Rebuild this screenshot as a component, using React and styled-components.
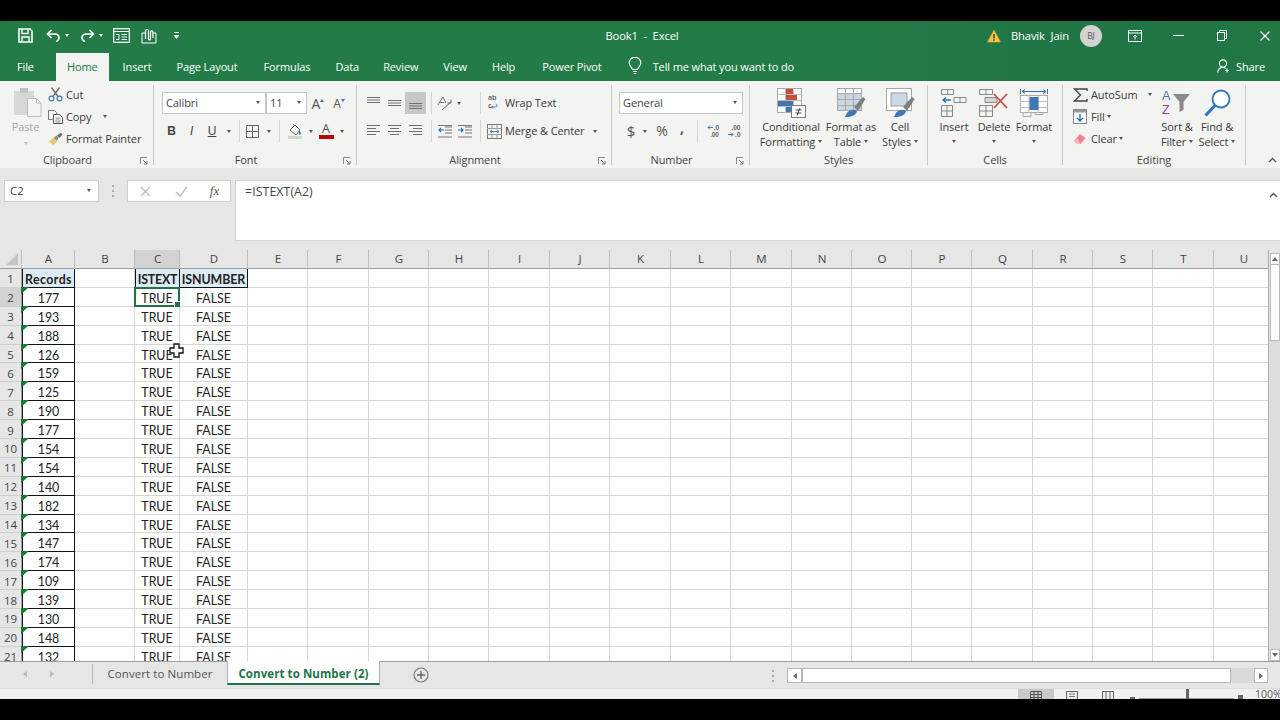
import React from "react";
import styled, { createGlobalStyle } from "styled-components";

const Global = createGlobalStyle`
  html, body { margin: 0; padding: 0; background: #000; }
  body { font-family: "Open Sans", "Noto Sans", sans-serif; color: #333; }
  * { box-sizing: border-box; }
`;

const Page = styled.div`
  position: relative; width: 1280px; height: 720px; overflow: hidden; background: #000;
  display: flex; flex-direction: column;
`;
const Black = styled.div`flex: none; height: ${p => p.$h}px; background: #000;`;

/* title bar */
const TitleBar = styled.header`
  flex: none; height: 32px; padding-bottom: 3px; color: #fff;
  background: linear-gradient(90deg, #237b48 0%, #237b48 68%, #1f7544 85%, #217845 100%);
  display: grid; grid-template-columns: 1fr auto 1fr; align-items: center;
  font-size: 11.2px; letter-spacing: -0.1px;
`;
const Quick = styled.div`display: flex; align-items: center; padding-left: 18px;`;
const QSlot = styled.span`display: flex; align-items: center; justify-content: center; flex: none; width: ${p => p.$w}px;`;
const WhiteCaret = styled.span`display: block; width: 0; height: 0; border: 2.5px solid transparent; border-top: 3px solid #fff; border-bottom: 0;`;
const TitleText = styled.div`padding-left: 4px; padding-bottom: 1px; white-space: pre;`;
const Account = styled.div`display: flex; align-items: center; justify-content: flex-end; padding-right: 10px;`;
const UserName = styled.span`margin: 0 11px 1px 10px; white-space: pre;`;
const Avatar = styled.span`
  width: 22px; height: 22px; border-radius: 50%; background: #d3d2d0; color: #5a5a5a;
  font-size: 8.5px; display: flex; align-items: center; justify-content: center; margin-right: 26px;
`;
const WinBtn = styled.span`display: flex; justify-content: flex-end; width: ${p => p.$w}px;`;

const TabsBar = styled.nav`
  flex: none; height: 28px; color: #fff; font-size: 11px; letter-spacing: -0.12px;
  background: linear-gradient(90deg, #237b48 0%, #237b48 68%, #1f7544 85%, #217845 100%);
  display: flex; align-items: stretch; padding-left: 17px;
`;
const Tab = styled.span`
  display: flex; align-items: center; padding: 0 ${p => p.$active ? 11 : 0}px 2px;
  margin-left: ${p => p.$gap}px; white-space: nowrap;
  background: ${p => p.$active ? "#f3f3f1" : "transparent"};
  color: ${p => p.$active ? "#217346" : "#fff"};
`;
const ShareBox = styled.span`margin-left: auto; padding: 0 15px 2px 0; display: flex; align-items: center; gap: 5px;`;

/* ribbon */
const Ribbon = styled.section`
  flex: none; height: 87px; background: #f3f3f1; display: flex; align-items: flex-start;
  font-size: 11px; letter-spacing: -0.1px; color: #3a3a3a; position: relative; padding-top: 4px;
`;
const Group = styled.div`
  flex: none; width: ${p => p.$w}px; height: 80px; border-right: 1px solid #c8c8c6;
  display: flex; flex-direction: column;
`;
const GroupBody = styled.div`flex: none; height: 70px; display: flex; padding-left: ${p => p.$pl || 0}px;`;
const GroupLabel = styled.div`
  flex: none; height: 10px; line-height: 10px; display: flex; font-size: 11px; color: #444;
`;
const LabelText = styled.span`flex: 1; text-align: center;`;
const Launcher = styled.span`flex: none; width: 18px; display: flex; align-items: center; justify-content: center; padding-top: 2px;`;
const Collapse = styled.span`margin-left: auto; align-self: flex-end; margin-right: 3px; margin-bottom: 5px; display: flex;`;

const PasteCol = styled.div`
  flex: none; width: 48px; padding: 3px 0 0 3px; display: flex; flex-direction: column; align-items: center; color: #a9a9a9;
`;
const PasteIconBox = styled.span`display: flex; margin-left: 4px;`;
const PasteLabel = styled.span`margin-top: 1px; line-height: 16px;`;
const PasteCaret = styled.span`
  display: block; width: 0; height: 0; margin-top: 7px;
  border-left: 2.5px solid transparent; border-right: 2.5px solid transparent; border-top: 3px solid #bbb;
`;
const SmallCol = styled.div`flex: none; width: ${p => p.$w}px; display: flex; flex-direction: column; margin-top: -1px;`;
const SmallRow = styled.div`height: 22px; display: flex; align-items: center; white-space: nowrap; padding-bottom: 1px;`;
const SmallIcon = styled.span`flex: none; width: 18px; display: flex; justify-content: flex-start; align-items: center;`;
const Rows = styled.div`flex: none; display: flex; flex-direction: column; gap: 6px; padding-top: 7px;`;
const Row = styled.div`height: 22px; display: flex; align-items: center; white-space: nowrap;`;
const RowText = styled.span`padding-bottom: 2px;`;
const Btn = styled.span`
  flex: none; width: ${p => p.$w}px; height: 22px; display: flex; align-items: center; justify-content: center;
  background: ${p => p.$on ? "#c6c6c6" : "transparent"};
`;
const Sep = styled.span`flex: none; width: ${p => p.$w}px; height: 22px; display: flex; justify-content: center;
  &::before { content: ""; width: 1px; height: 100%; background: #d4d4d2; }
`;
const Spacer = styled.span`flex: none; width: ${p => p.$w}px;`;
const Caret = styled.span`
  display: block; width: 0; height: 0; flex: none;
  border-left: 2.5px solid transparent; border-right: 2.5px solid transparent; border-top: 3px solid #555;
  margin-left: ${p => p.$ml || 0}px;
`;
const Combo = styled.div`
  flex: none; width: ${p => p.$w}px; height: 22px; background: #fff; border: 1px solid #c6c6c6;
  display: flex; align-items: center; justify-content: space-between; padding: 0 5px 2px 3px; color: #444;
`;
const BigBtn = styled.div`
  flex: none; width: ${p => p.$w}px; padding-top: 3px; display: flex; flex-direction: column; align-items: center;
`;
const BigIcon = styled.div`height: 30px; display: flex; justify-content: center; align-items: center;`;
const BigText = styled.div`margin-top: 1px; line-height: 15px; text-align: center; white-space: nowrap; display: flex; flex-direction: column; align-items: center;`;
const BigLine = styled.span`height: 15px; display: flex; align-items: center; gap: 3px;`;
const BoldMark = styled.span`font-weight: ${p => p.$b ? 700 : 400}; font-style: ${p => p.$i ? "italic" : "normal"}; text-decoration: ${p => p.$u ? "underline" : "none"}; font-family: "Liberation Sans", sans-serif; font-size: 12px; color: #444;`;
const Symbol = styled.span`font-size: ${p => p.$s}px; color: #555; line-height: 1; padding-bottom: ${p => p.$up || 0}px; font-weight: ${p => p.$w || 400};`;

/* small lettered icons, kept as real text */
const SizeA = styled.span`display: flex; align-items: flex-end; height: 16px;`;
const SizeLetter = styled.span`font-size: ${p => p.$s}px; line-height: 14px; color: #555;`;
const SizeMark = styled.span`
  display: block; width: 0; height: 0; margin: 0 0 9px 0;
  border-left: 2.5px solid transparent; border-right: 2.5px solid transparent;
  ${p => p.$up ? "border-bottom: 3px solid #666;" : "border-top: 3px solid #3f78b5;"}
`;
const ColorA = styled.span`display: flex; flex-direction: column; align-items: center; width: 15px;`;
const ColorLetter = styled.span`font-size: 12.5px; line-height: 12px; color: #555;`;
const ColorBar = styled.span`display: block; width: 15px; height: 3.5px; background: #c00000;`;
const WrapBox = styled.span`display: flex; flex-direction: column; width: 13px; padding-bottom: 2px;`;
const WrapLine = styled.span`display: flex; align-items: center; height: 8px; font-size: 7px; line-height: 8px; font-weight: 600; color: #555; letter-spacing: 0;`;
const Tiny = styled.span`display: flex; flex-direction: column; align-items: flex-end; width: 17px;`;
const TinyLine = styled.span`display: flex; align-items: center; height: 7px; gap: 1px; font: 700 6.5px/7px "Liberation Sans", sans-serif; color: #666; letter-spacing: 0;`;
const SortBox = styled.span`display: flex; align-items: center; width: 30px; height: 30px;`;
const SortLetters = styled.span`display: flex; flex-direction: column; width: 10px; font-family: "Liberation Sans", sans-serif; font-size: 12.5px; line-height: 14.4px; letter-spacing: 0;`;
const SortLetter = styled.span`color: ${p => p.$c};`;

/* formula bar */
const Band = styled.div`flex: none; height: ${p => p.$h}px; background: #e6e6e4;`;
const FormulaBar = styled.div`
  flex: none; height: 63px; background: #e6e6e4; display: flex; align-items: flex-start; padding: 2px 0 0 4px;
  font-size: 11.5px; color: #444;
`;
const NameBox = styled.div`
  flex: none; width: 95px; height: 22px; background: #fff; border: 1px solid #cfcfcd;
  display: flex; align-items: center; justify-content: space-between; padding: 0 7px 1px 5px;
`;
const Dots = styled.span`flex: none; width: 28px; height: 22px; display: flex; align-items: center; justify-content: center;`;
const FxBox = styled.div`
  flex: none; width: 104px; height: 22px; background: #fff; border: 1px solid #cfcfcd; display: flex; align-items: center;
`;
const FxSlot = styled.span`flex: none; width: ${p => p.$w}px; display: flex; justify-content: center; align-items: center;`;
const FxMark = styled.span`font-family: "Liberation Serif", serif; font-style: italic; font-size: 13px; color: #555;`;
const FormulaInput = styled.div`
  flex: 1; height: 61px; margin-left: 4px; background: #fff; border: 1px solid #d4d4d2; border-right: 0;
  padding: 2px 0 0 9px; display: flex; justify-content: space-between; line-height: 18px; font-size: 12.3px; letter-spacing: 0.1px;
`;
const FormulaCollapse = styled.span`padding: 2px 2px 0 0;`;

/* sheet */
const COLS = [["",22],["A",53],["B",60],["C",45],["D",68],["E",60],["F",61],["G",60],["H",60],["I",61],["J",60],["K",61],["L",60],["M",61],["N",60],["O",60],["P",60],["Q",61],["R",60],["S",60],["T",61],["U",60]];
const Sheet = styled.div`flex: none; height: 411px; display: flex; background: #e6e6e4;`;
const Grid = styled.div`
  flex: none; width: 1269px; height: 411px; overflow: hidden; background: #fff; border-right: 1px solid #a8a8a8;
  display: grid; grid-template-columns: ${COLS.map(c => c[1] + "px").join(" ")};
  grid-template-rows: 19px repeat(21, 18.9px);
  font-family: Lato, "Liberation Sans", sans-serif; font-size: 12.4px; color: #222;
`;
const Corner = styled.div`
  background: #e6e6e6; border-bottom: 1px solid #9e9e9e; border-right: 1px solid #bdbdbd; display: flex; align-items: flex-end; justify-content: flex-end; padding: 0 3px 3px 0;
  &::before { content: ""; border-left: 12px solid transparent; border-bottom: 12px solid #c4c4c4; }
`;
const ColHead = styled.div`
  background: ${p => p.$on ? "#d2d2d2" : "#e6e6e6"}; border-bottom: 1px solid #9e9e9e; border-right: 1px solid #bdbdbd;
  display: flex; align-items: center; justify-content: center; color: #444;
  font-family: "Open Sans", sans-serif; font-size: 11.5px; padding: 0 0 1px 1px;
`;
const RowHead = styled.div`
  background: ${p => p.$on ? "#d2d2d2" : "#e6e6e6"}; border-bottom: 1px solid #cfcfcf; border-right: 1px solid #a8a8a8;
  display: flex; align-items: center; justify-content: center; color: #444;
  font-family: "Open Sans", sans-serif; font-size: 11.5px; padding-top: 2px;
`;
const Cell = styled.div`
  position: relative; display: flex; align-items: center; justify-content: center; white-space: nowrap; padding-top: 3px;
  border-right: 1px solid ${p => p.$box ? "#111" : "#d6d6d6"}; border-bottom: 1px solid ${p => p.$box ? "#111" : "#d6d6d6"};
  border-left: ${p => p.$left ? "1px solid #111" : "0"};
  background: ${p => p.$blue ? "#ddebf7" : "#fff"};
  font-weight: ${p => p.$bold ? 700 : 400};
  letter-spacing: ${p => p.$sp || 0}px;
`;
const ErrFlag = styled.span`
  position: absolute; left: -2px; top: -1px; width: 0; height: 0; border-right: 8px solid transparent; border-top: 7px solid #1a7a34;
`;
const Selection = styled.span`
  position: absolute; inset: -1px -1px -1px -1px; border: 2px solid #217346; pointer-events: none;
  &::after { content: ""; position: absolute; right: -4px; bottom: -4px; width: 6px; height: 6px; background: #217346; border: 1px solid #fff; }
`;
const VScroll = styled.div`flex: 1; display: flex; flex-direction: column; padding: 3px 0 0 1px; align-items: stretch;`;
const SBtn = styled.span`
  flex: none; height: ${p => p.$h}px; width: ${p => p.$w ? p.$w + "px" : "auto"}; background: #fff; border: 1px solid #b8b8b8;
  display: flex; align-items: center; justify-content: center;
`;
const VThumb = styled.span`flex: none; height: 76px; background: #fff; border: 1px solid #b8b8b8; border-top: 0;`;
const VTrack = styled.span`flex: 1; background: #dcdcdc;`;
const Tri = styled.span`
  display: block; width: 0; height: 0;
  ${p => p.$dir === "up" && "border: 3px solid transparent; border-bottom: 4px solid #666; border-top: 0;"}
  ${p => p.$dir === "down" && "border: 3px solid transparent; border-top: 4px solid #666; border-bottom: 0;"}
  ${p => p.$dir === "left" && "border: 3.5px solid transparent; border-right: 4px solid #666; border-left: 0;"}
  ${p => p.$dir === "right" && "border: 3.5px solid transparent; border-left: 4px solid #666; border-right: 0;"}
`;

/* sheet tabs */
const SheetTabs = styled.div`
  flex: none; height: 27px; background: #e6e6e4; border-top: 1px solid #a0a0a0; display: flex; align-items: flex-start;
  font-size: 11.5px; color: #555; letter-spacing: 0.08px;
`;
const NavArrows = styled.div`flex: none; width: 93px; height: 20px; margin-top: 2px; border-right: 1px solid #b8b8b8; display: flex; align-items: center; padding-left: 23px; gap: 23px;`;
const FadedTri = styled(Tri)`opacity: .35;`;
const SheetTab = styled.div`
  flex: none; height: 23px; display: flex; align-items: center; white-space: nowrap;
  width: ${p => p.$w}px; justify-content: center;
  ${p => p.$active && "background:#fff; color:#217346; font-weight:700; border-bottom:2px solid #217346; border-left:1px solid #b0b0b0; border-right:1px solid #b0b0b0; margin-top:-1px; height:24px; padding-top:3px;"}
`;
const AddSheet = styled.span`flex: none; margin-left: 33px; margin-top: 5px; display: flex;`;
const HScroll = styled.div`
  margin-left: auto; margin-right: 12px; margin-top: 6px; flex: none; display: flex; align-items: center;
`;
const DragDots = styled.span`flex: none; margin-right: 13px; display: flex;`;
const HThumb = styled.span`flex: none; width: 429px; height: 15px; background: #fff; border: 1px solid #b8b8b8;`;
const HTrack = styled.span`flex: none; width: 23px; height: 15px; background: #d9d9d9;`;

/* status bar */
const Status = styled.footer`
  flex: none; height: 11px; overflow: hidden; background: #f1f1ef; border-top: 1px solid #dcdcda;
  display: flex; justify-content: flex-end; align-items: flex-start; font-size: 10.5px; color: #555;
`;
const ViewBtn = styled.span`
  flex: none; width: 36px; height: 11px; display: flex; justify-content: center; padding-top: 2px; background: ${p => p.$on ? "#c9c9c9" : "transparent"};
`;
const ZoomTrack = styled.span`
  flex: none; width: 124px; height: 10px; display: flex; align-items: flex-end; position: relative; padding: 0 0 0 4px;
`;
const ZoomMinus = styled.span`flex: none; width: 5px; height: 2px; background: #666; margin-right: 4px;`;
const ZoomLine = styled.span`flex: none; width: 95px; height: 1px; background: #999;`;
const ZoomPlus = styled.span`flex: none; width: 5px; height: 4px; background: #666; margin-left: 4px;`;
const ZoomThumb = styled.span`position: absolute; left: 60px; top: 0; width: 3px; height: 10px; background: #666;`;
const ZoomText = styled.span`flex: none; width: 30px; padding-left: 5px; white-space: nowrap; line-height: 11px;`;

const CursorWrap = styled.span`position: absolute; left: 169px; top: 343px; display: flex; pointer-events: none;`;

/* icons */
const Svg = ({ w, h, children, ...r }) => <svg width={w} height={h} viewBox={`0 0 ${w} ${h}`} fill="none" {...r}>{children}</svg>;
const Lines = ({ rows, c = "#707070", h = 1 }) => (
  <Svg w={16} h={14}>{rows.map(([a, b, y], i) => <rect key={i} x={a} y={y} width={b - a} height={h} fill={c} />)}</Svg>
);
const Save = () => <Svg w={15} h={15}><path d="M1 1h11l2 2v11H1z" stroke="#fff" strokeWidth="1.6"/><path d="M4 1.5v4h6v-4M4 14v-5h7v5" stroke="#fff" strokeWidth="1.4"/></Svg>;
const Undo = () => <Svg w={15} h={13}><path d="M5.5 1 1.5 5l4 4" stroke="#fff" strokeWidth="1.7"/><path d="M2 5h7a4 4 0 0 1 4 4 4 4 0 0 1-3 3.5" stroke="#fff" strokeWidth="1.7"/></Svg>;
const Redo = () => <Svg w={15} h={13}><path d="M9.5 1l4 4-4 4" stroke="#fff" strokeWidth="1.7"/><path d="M13 5H6a4 4 0 0 0-4 4 4 4 0 0 0 3 3.5" stroke="#fff" strokeWidth="1.7"/></Svg>;
const FormIco = () => <Svg w={17} h={15}><rect x=".7" y=".7" width="15.6" height="13.6" stroke="#fff" strokeWidth="1.2"/><path d="M1 3.5h15M3 6.5h3v5H3M8.5 6.5H14M8.5 9H14M8.5 11.5H14" stroke="#fff"/></Svg>;
const ClipIco = () => <Svg w={16} h={16}><path d="M1 5v10h14V5h-3M4 5H1" stroke="#fff"/><path d="M4.5 11V3a1.5 1.5 0 0 1 3 0v8a1 1 0 0 0 2 0V4a1.2 1.2 0 0 1 2.4 0v6" stroke="#fff" strokeWidth="1.2"/></Svg>;
const Custom = () => <Svg w={7} h={8}><rect x="1" y="0" width="5" height="1" fill="#fff"/><path d="M0.5 3h6L3.5 7z" fill="#fff"/></Svg>;
const Warn = () => <Svg w={14} h={14}><path d="M7 1 13.5 13h-13z" fill="#f6c342" stroke="#e0a52c" strokeWidth=".6"/><rect x="6.3" y="5" width="1.4" height="4.5" fill="#4a3a10"/><rect x="6.3" y="10.3" width="1.4" height="1.4" fill="#4a3a10"/></Svg>;
const DisplayOpts = () => <Svg w={14} h={12}><rect x=".5" y=".5" width="13" height="11" stroke="#fff"/><path d="M1 3h12" stroke="#fff"/><path d="M7 9.5V5M5 7l2-2 2 2" stroke="#fff"/></Svg>;
const Minimize = () => <Svg w={11} h={2}><rect width="11" height="1" fill="#fff"/></Svg>;
const Restore = () => <Svg w={10} h={11}><rect x=".5" y="2.5" width="7" height="8" stroke="#fff"/><path d="M2.5 2.5v-2h7v8h-2" stroke="#fff"/></Svg>;
const CloseX = () => <Svg w={10} h={10}><path d="M.5.5l9 9M9.5.5l-9 9" stroke="#fff" strokeWidth="1.1"/></Svg>;
const Bulb = () => <Svg w={14} h={18}><path d="M4.5 12.5C4 10.5 1.2 9 1.2 6a5.8 5.8 0 0 1 11.6 0c0 3-2.8 4.5-3.3 6.5z" stroke="#fff" strokeWidth="1.1"/><path d="M5 14.5h4M5.7 16.5h2.6" stroke="#fff"/></Svg>;
const ShareIco = () => <Svg w={14} h={14}><circle cx="6" cy="4.5" r="3.6" stroke="#fff" strokeWidth="1.1"/><path d="M.7 13.5c.3-3 2.5-5 5.3-5 1 0 2 .3 2.8.8M10 9.5v4M8 11.5h4" stroke="#fff" strokeWidth="1.1"/></Svg>;
const PasteIco = () => <Svg w={28} h={30}><rect x="0" y="3" width="20" height="24" fill="#d7d7d5"/><rect x="6" y="0" width="8" height="5" fill="#c2c2c0"/><path d="M13.5 10.5h9l4.5 4.5v13.5H13.5z" fill="#f4f4f2" stroke="#bdbdbb"/><path d="M22.5 10.5V15H27" stroke="#bdbdbb"/></Svg>;
const Cut = () => <Svg w={15} h={15}><circle cx="3.5" cy="11.5" r="2.4" stroke="#3f78b5" strokeWidth="1.2"/><circle cx="11.5" cy="11.5" r="2.4" stroke="#3f78b5" strokeWidth="1.2"/><path d="M5 9.5 11.5.5M10 9.5 3.5.5" stroke="#666" strokeWidth="1.3"/></Svg>;
const Copy = () => <Svg w={15} h={14}><path d="M.5.5h6l2 2v2M.5.5v9h4" stroke="#777"/><path d="M5.5 4.5h6l3 3v6h-9z" stroke="#555" fill="#fff"/><path d="M7.5 8h5M7.5 10h5M7.5 12h5" stroke="#888"/></Svg>;
const Painter = () => <Svg w={16} h={14}><path d="M1 9.5 5 13l4-3-4-4z" fill="#e7c56b"/><path d="M5.5 6l3-2.5 2 2L9 9z" fill="#8a8a8a"/><path d="M9 3.5 13 .8l1.5 1.7-3.2 3.5z" fill="#6b6b6b"/></Svg>;
const Borders = () => <Svg w={13} h={13}><rect x=".5" y=".5" width="12" height="12" stroke="#666"/><path d="M6.5 0v13M0 6.5h13" stroke="#666"/></Svg>;
const Fill = () => <Svg w={16} h={16}><rect x="1" y="13" width="14" height="3" fill="#d4d4d2"/><path d="M3 7 8 2l5 5-4 5z" stroke="#666" fill="#fff"/><path d="M6 1.5 8 3" stroke="#666"/><path d="M12 7c1.5 1.5 2.5 3 1.5 4.5S11 10 12 7z" fill="#3f78b5"/></Svg>;
const Orient = () => <Svg w={16} h={15}><path d="M1 9 6 1l3 6M2.8 6.5h4.5" stroke="#777"/><path d="M5 14l9-8" stroke="#666"/><path d="M14 3.5V7h-3.5" stroke="#666"/></Svg>;
const WrapArrow = () => <Svg w={7} h={6}><path d="M.5 4h4c2 0 2-3 0-3M2 2.5.5 4 2 5.5" stroke="#3f78b5"/></Svg>;
const Merge = () => <Svg w={15} h={15}><rect x=".5" y=".5" width="14" height="14" stroke="#777"/><path d="M0 4.5h15M0 10.5h15M5 .5v4M10 .5v4M5 10.5v4M10 10.5v4" stroke="#999"/><path d="M3 7.5h9M5 6 3 7.5 5 9M10 6l2 1.5L10 9" stroke="#3f78b5" strokeWidth=".9"/></Svg>;
const Indent = ({ inc }) => <Svg w={16} h={13}><path d="M8 2h7M8 5h7M8 8h7M1 12h14M1 0.5h14" stroke="#777"/><path d={inc ? "M1 5h5M4 3l2 2-2 2" : "M2 5h5M4 3 2 5l2 2"} stroke="#2f6fb5" strokeWidth="1.2"/></Svg>;
const ArrowL = () => <Svg w={6} h={5}><path d="M6 2.5H1M3 .5l-2 2 2 2" stroke="#3f78b5"/></Svg>;
const ArrowR = () => <Svg w={6} h={5}><path d="M0 2.5h5M3 .5l2 2-2 2" stroke="#3f78b5"/></Svg>;
const Launch = () => <Svg w={8} h={8}><path d="M.5 7V.5H7" stroke="#888"/><path d="M3 3l4 4M7 4v3H4" stroke="#777"/></Svg>;
const Chevron = () => <Svg w={9} h={6}><path d="M1 5l3.5-3.5L8 5" stroke="#555" strokeWidth="1.3"/></Svg>;
const CondFmt = () => <Svg w={29} h={30}>
  <rect x=".5" y=".5" width="24" height="24" fill="#fff" stroke="#a6a6a6"/>
  <path d="M8.5 0v25M16.5 0v25M0 6.5h25M0 12.5h25M0 18.5h25" stroke="#bdbdbd"/>
  <rect x="9" y="1" width="7" height="5" fill="#c0533a"/><rect x="9" y="7" width="11" height="5" fill="#c0533a"/>
  <rect x="1" y="13" width="15" height="5" fill="#3f78b5"/><rect x="9" y="19" width="7" height="5" fill="#3f78b5"/>
  <rect x="14.5" y="17.5" width="14" height="12" fill="#fff" stroke="#7a7a7a"/>
  <path d="M18.5 22h6M18.5 25h6M23 20l-3 7.5" stroke="#444"/></Svg>;
const FmtTable = () => <Svg w={29} h={30}>
  <rect x=".5" y=".5" width="24" height="22" fill="#fff" stroke="#a6a6a6"/>
  <rect x="1" y="5" width="23" height="17" fill="#c9d6e4"/>
  <path d="M8.5 0v23M16.5 0v23M0 5.5h25M0 11.5h25M0 17.5h25" stroke="#a8a8a8"/>
  <path d="M17 19 26 9l2.5 2L21 23z" fill="#7f7f7f"/><path d="M8 29c2-7 8-9 12-6-1 4-5 6-12 6z" fill="#3f78b5"/></Svg>;
const CellStyle = () => <Svg w={29} h={30}>
  <rect x=".5" y=".5" width="25" height="22" fill="#fff" stroke="#a6a6a6"/>
  <rect x="5" y="5" width="16" height="13" fill="#c9d9e8" stroke="#999"/>
  <path d="M17 19 26 9l2.5 2L21 23z" fill="#7f7f7f"/><path d="M8 29c2-7 8-9 12-6-1 4-5 6-12 6z" fill="#3f78b5"/></Svg>;
const InsertIco = () => <Svg w={26} h={28}>
  <path d="M.5.5h12v5H.5zM6.5.5v5M.5 16.5h11v11H.5zM6 16.5v11M.5 22h11" stroke="#888"/>
  <path d="M13 8.5h12v5H13zM19 8.5v5" stroke="#888"/><path d="M2 11h8M5 8.5 2 11l3 2.5" stroke="#2f6fb5" strokeWidth="1.4"/></Svg>;
const DeleteIco = () => <Svg w={30} h={28}>
  <path d="M.5.5h13v5H.5zM7 .5v5M.5 16.5h13v11H.5zM7 16.5v11M.5 22h13" stroke="#888"/>
  <path d="M6 8.5h12v5H6z" stroke="#888" fill="#d4d4d4"/><path d="M15 5l13 14M28 5 15 19" stroke="#c8503a" strokeWidth="1.8"/></Svg>;
const FormatIco = () => <Svg w={28} h={30}>
  <path d="M.5 1v5M27.5 1v5M2 3.5h24M2 3.5l3-2M2 3.5l3 2M26 3.5l-3-2M26 3.5l-3 2" stroke="#2f6fb5"/>
  <rect x=".5" y="7.5" width="27" height="17" fill="#fff" stroke="#aaa"/>
  <path d="M9 7v18M18 7v18M0 13.5h28M0 19.5h28" stroke="#bbb"/>
  <rect x="9.5" y="9" width="9" height="13" fill="#3f78b5"/>
  <path d="M3 24.5v4h8v-4M15 24.5v2h8v-2" stroke="#aaa"/></Svg>;
const Sigma = () => <Svg w={15} h={14}><path d="M14 3V1H1.5l6 6-6 6H14v-2" stroke="#444" strokeWidth="1.4"/></Svg>;
const FillDown = () => <Svg w={14} h={15}><rect x=".5" y=".5" width="13" height="14" fill="#fff" stroke="#888"/><rect x="1" y="1" width="12" height="2.5" fill="#999"/><path d="M7 5v7M4 9l3 3 3-3" stroke="#2f6fb5" strokeWidth="1.4"/></Svg>;
const Eraser = () => <Svg w={13} h={12}><path d="M1 8l6-7 5.5 4-5 6H4z" fill="#ee7f94"/><path d="M1 8l3 3h3.5L4 5z" fill="#f6b6c1"/></Svg>;
const Funnel = () => <Svg w={19} h={20}><path d="M1 1h17l-6.5 8v8l-4 2V9z" fill="#8a8a8a"/></Svg>;
const FindIco = () => <Svg w={29} h={30}><circle cx="18" cy="11" r="8.5" stroke="#2f78c0" strokeWidth="1.8" fill="#fff"/><path d="M12 17.5 2.5 27.5" stroke="#2f78c0" strokeWidth="3.2"/></Svg>;
const DotsIco = () => <Svg w={2} h={12}><path d="M0 0h2v2H0zM0 5h2v2H0zM0 10h2v2H0z" fill="#a8a8a8"/></Svg>;
const XIco = () => <Svg w={11} h={11}><path d="M1 1l9 9M10 1l-9 9" stroke="#bfbfbf" strokeWidth="1.4"/></Svg>;
const CheckIco = () => <Svg w={13} h={11}><path d="M1 6l4 4 7-9" stroke="#bfbfbf" strokeWidth="1.5"/></Svg>;
const PlusCircle = () => <Svg w={16} h={16}><circle cx="8" cy="8" r="7" stroke="#777" strokeWidth="1.2"/><path d="M8 4v8M4 8h8" stroke="#666" strokeWidth="1.4"/></Svg>;
const NormalV = () => <Svg w={12} h={9}><path d="M.5.5h11v9h-11zM4 .5v9M8 .5v9M.5 3.5h11M.5 6.5h11" stroke="#555"/></Svg>;
const PageV = () => <Svg w={12} h={9}><path d="M.5.5h11v9h-11z" stroke="#666"/><path d="M3 3h6M3 5.5h6" stroke="#777"/></Svg>;
const BreakV = () => <Svg w={12} h={9}><path d="M.5.5h11v9h-11zM4 .5v9M8 .5v9" stroke="#666"/></Svg>;
const Cursor = () => <Svg w={15} h={15}><path d="M5 1h5v4h4v5h-4v4H5v-4H1V5h4z" fill="#fff" stroke="#111" strokeWidth="1.3"/></Svg>;

const records = [177,193,188,126,159,125,190,177,154,154,140,182,134,147,174,109,139,130,148,132];

const SheetGrid = () => (
  <Grid>
    {COLS.map(([n], i) => i === 0 ? <Corner key="c" /> : <ColHead key={n} $on={n === "C"}>{n}</ColHead>)}
    {Array.from({ length: 21 }, (_, r) => COLS.map(([n], c) => {
      const key = `${r}-${c}`;
      if (c === 0) return <RowHead key={key} $on={r === 1}>{r + 1}</RowHead>;
      if (r === 0) {
        const t = { A: ["Records", 0.4], C: ["ISTEXT", -0.25], D: ["ISNUMBER", -0.1] }[n];
        return t ? <Cell key={key} $box $blue $bold $sp={t[1]} $left={n !== "D"}>{t[0]}</Cell> : <Cell key={key} />;
      }
      if (n === "A") return <Cell key={key} $box $left><ErrFlag />{records[r - 1]}</Cell>;
      if (n === "C") return <Cell key={key}>TRUE{r === 1 && <Selection />}</Cell>;
      if (n === "D") return <Cell key={key}>FALSE</Cell>;
      return <Cell key={key} />;
    }))}
  </Grid>
);

const align = {
  top: [[1, 14, 1], [1, 14, 3.5], [1, 14, 6]],
  mid: [[1, 14, 4], [1, 14, 6.5], [1, 14, 9]],
  bot: [[1, 14, 7], [1, 14, 9.5], [1, 14, 12]],
  left: [[1, 14, 1], [1, 10, 4], [1, 14, 7], [1, 10, 10]],
  center: [[1, 14, 1], [3, 12, 4], [1, 14, 7], [3, 12, 10]],
  right: [[1, 14, 1], [5, 14, 4], [1, 14, 7], [5, 14, 10]],
};

export default function App() {
  return (
    <Page>
      <Global />
      <Black $h={21} />
      <TitleBar>
        <Quick>
          <Save />
          <Spacer $w={13} /><Undo /><QSlot $w={11}><WhiteCaret /></QSlot>
          <Spacer $w={8} /><Redo /><QSlot $w={11}><WhiteCaret /></QSlot>
          <Spacer $w={7} /><FormIco />
          <Spacer $w={11} /><ClipIco />
          <Spacer $w={16} /><Custom />
        </Quick>
        <TitleText>Book1  -  Excel</TitleText>
        <Account>
          <Warn />
          <UserName>Bhavik  Jain</UserName>
          <Avatar>BJ</Avatar>
          <DisplayOpts />
          <WinBtn $w={42}><Minimize /></WinBtn>
          <WinBtn $w={43}><Restore /></WinBtn>
          <WinBtn $w={43}><CloseX /></WinBtn>
        </Account>
      </TitleBar>
      <TabsBar>
        <Tab $gap={0}>File</Tab>
        <Tab $gap={22} $active>Home</Tab>
        <Tab $gap={14}>Insert</Tab>
        <Tab $gap={25}>Page Layout</Tab>
        <Tab $gap={26}>Formulas</Tab>
        <Tab $gap={25}>Data</Tab>
        <Tab $gap={24}>Review</Tab>
        <Tab $gap={25}>View</Tab>
        <Tab $gap={25}>Help</Tab>
        <Tab $gap={27}>Power Pivot</Tab>
        <Tab $gap={26}><Bulb /></Tab>
        <Tab $gap={11}>Tell me what you want to do</Tab>
        <ShareBox><ShareIco />Share</ShareBox>
      </TabsBar>

      <Ribbon>
        <Group $w={154}>
          <GroupBody>
            <PasteCol>
              <PasteIconBox><PasteIco /></PasteIconBox>
              <PasteLabel>Paste</PasteLabel>
              <PasteCaret />
            </PasteCol>
            <SmallCol $w={104}>
              <SmallRow><SmallIcon><Cut /></SmallIcon>Cut</SmallRow>
              <SmallRow><SmallIcon><Copy /></SmallIcon>Copy<Caret $ml={12} /></SmallRow>
              <SmallRow><SmallIcon><Painter /></SmallIcon>Format Painter</SmallRow>
            </SmallCol>
          </GroupBody>
          <GroupLabel><LabelText>Clipboard</LabelText><Launcher><Launch /></Launcher></GroupLabel>
        </Group>

        <Group $w={203}>
          <GroupBody $pl={8}>
            <Rows>
              <Row>
                <Combo $w={104}>Calibri<Caret /></Combo>
                <Combo $w={41}>11<Caret /></Combo>
                <Btn $w={22}><SizeA><SizeLetter $s={14}>A</SizeLetter><SizeMark $up /></SizeA></Btn>
                <Btn $w={20}><SizeA><SizeLetter $s={12}>A</SizeLetter><SizeMark /></SizeA></Btn>
              </Row>
              <Row>
                <Btn $w={19}><BoldMark $b>B</BoldMark></Btn>
                <Btn $w={21}><BoldMark $i>I</BoldMark></Btn>
                <Btn $w={20}><BoldMark $u>U</BoldMark></Btn>
                <Btn $w={14}><Caret /></Btn>
                <Sep $w={6} />
                <Btn $w={21}><Borders /></Btn>
                <Btn $w={12}><Caret /></Btn>
                <Sep $w={8} />
                <Btn $w={24}><Fill /></Btn>
                <Btn $w={7}><Caret /></Btn>
                <Btn $w={24}><ColorA><ColorLetter>A</ColorLetter><ColorBar /></ColorA></Btn>
                <Btn $w={8}><Caret /></Btn>
              </Row>
            </Rows>
          </GroupBody>
          <GroupLabel><LabelText>Font</LabelText><Launcher><Launch /></Launcher></GroupLabel>
        </Group>

        <Group $w={255}>
          <GroupBody $pl={6}>
            <Rows>
              <Row>
                <Btn $w={21}><Lines rows={align.top} /></Btn>
                <Btn $w={21}><Lines rows={align.mid} /></Btn>
                <Btn $w={21} $on><Lines rows={align.bot} /></Btn>
                <Sep $w={10} />
                <Btn $w={18}><Orient /></Btn>
                <Btn $w={10}><Caret /></Btn>
                <Spacer $w={12} />
                <Sep $w={8} />
                <Btn $w={21}><WrapBox><WrapLine>ab</WrapLine><WrapLine>c<WrapArrow /></WrapLine></WrapBox></Btn>
                <RowText>Wrap Text</RowText>
              </Row>
              <Row>
                <Btn $w={21}><Lines rows={align.left} /></Btn>
                <Btn $w={21}><Lines rows={align.center} /></Btn>
                <Btn $w={21}><Lines rows={align.right} /></Btn>
                <Sep $w={10} />
                <Btn $w={18}><Indent /></Btn>
                <Btn $w={22}><Indent inc /></Btn>
                <Sep $w={8} />
                <Btn $w={21}><Merge /></Btn>
                <RowText>Merge &amp; Center</RowText>
                <Caret $ml={8} />
              </Row>
            </Rows>
          </GroupBody>
          <GroupLabel><LabelText>Alignment</LabelText><Launcher><Launch /></Launcher></GroupLabel>
        </Group>

        <Group $w={138}>
          <GroupBody $pl={7}>
            <Rows>
              <Row><Combo $w={124}>General<Caret /></Combo></Row>
              <Row>
                <Spacer $w={2} />
                <Btn $w={20}><Symbol $s={15}>$</Symbol></Btn>
                <Btn $w={8}><Caret /></Btn>
                <Btn $w={26}><Symbol $s={14}>%</Symbol></Btn>
                <Btn $w={14}><Symbol $s={14} $up={7} $w={700}>,</Symbol></Btn>
                <Sep $w={16} />
                <Btn $w={14}><Tiny><TinyLine><ArrowL />.0</TinyLine><TinyLine>.00</TinyLine></Tiny></Btn>
                <Btn $w={26}><Tiny><TinyLine>.00</TinyLine><TinyLine><ArrowR />.0</TinyLine></Tiny></Btn>
              </Row>
            </Rows>
          </GroupBody>
          <GroupLabel><LabelText>Number</LabelText><Launcher><Launch /></Launcher></GroupLabel>
        </Group>

        <Group $w={178}>
          <GroupBody $pl={10}>
            <BigBtn $w={62}><BigIcon><CondFmt /></BigIcon><BigText><BigLine>Conditional</BigLine><BigLine>Formatting<Caret /></BigLine></BigText></BigBtn>
            <BigBtn $w={58}><BigIcon><FmtTable /></BigIcon><BigText><BigLine>Format as</BigLine><BigLine>Table<Caret /></BigLine></BigText></BigBtn>
            <BigBtn $w={40}><BigIcon><CellStyle /></BigIcon><BigText><BigLine>Cell</BigLine><BigLine>Styles<Caret /></BigLine></BigText></BigBtn>
          </GroupBody>
          <GroupLabel><LabelText>Styles</LabelText></GroupLabel>
        </Group>

        <Group $w={135}>
          <GroupBody $pl={6}>
            <BigBtn $w={40}><BigIcon><InsertIco /></BigIcon><BigText><BigLine>Insert</BigLine><BigLine><Caret /></BigLine></BigText></BigBtn>
            <BigBtn $w={40}><BigIcon><DeleteIco /></BigIcon><BigText><BigLine>Delete</BigLine><BigLine><Caret /></BigLine></BigText></BigBtn>
            <BigBtn $w={40}><BigIcon><FormatIco /></BigIcon><BigText><BigLine>Format</BigLine><BigLine><Caret /></BigLine></BigText></BigBtn>
          </GroupBody>
          <GroupLabel><LabelText>Cells</LabelText></GroupLabel>
        </Group>

        <Group $w={183}>
          <GroupBody $pl={10}>
            <SmallCol $w={84}>
              <SmallRow><SmallIcon><Sigma /></SmallIcon>AutoSum<Caret $ml={10} /></SmallRow>
              <SmallRow><SmallIcon><FillDown /></SmallIcon>Fill<Caret $ml={2} /></SmallRow>
              <SmallRow><SmallIcon><Eraser /></SmallIcon>Clear<Caret $ml={2} /></SmallRow>
            </SmallCol>
            <BigBtn $w={40}><BigIcon><SortBox><SortLetters><SortLetter $c="#3f78b5">A</SortLetter><SortLetter $c="#7d4a9d">Z</SortLetter></SortLetters><Funnel /></SortBox></BigIcon><BigText><BigLine>Sort &amp;</BigLine><BigLine>Filter<Caret /></BigLine></BigText></BigBtn>
            <BigBtn $w={40}><BigIcon><FindIco /></BigIcon><BigText><BigLine>Find &amp;</BigLine><BigLine>Select<Caret /></BigLine></BigText></BigBtn>
          </GroupBody>
          <GroupLabel><LabelText>Editing</LabelText></GroupLabel>
        </Group>
        <Collapse><Chevron /></Collapse>
      </Ribbon>

      <Band $h={10} />
      <FormulaBar>
        <NameBox>C2<Caret /></NameBox>
        <Dots><DotsIco /></Dots>
        <FxBox>
          <FxSlot $w={35}><XIco /></FxSlot>
          <FxSlot $w={36}><CheckIco /></FxSlot>
          <FxSlot $w={31}><FxMark>fx</FxMark></FxSlot>
        </FxBox>
        <FormulaInput>=ISTEXT(A2)<FormulaCollapse><Chevron /></FormulaCollapse></FormulaInput>
      </FormulaBar>
      <Band $h={9} />

      <Sheet>
        <SheetGrid />
        <VScroll>
          <SBtn $h={12}><Tri $dir="up" /></SBtn>
          <VThumb />
          <VTrack />
          <SBtn $h={12}><Tri $dir="down" /></SBtn>
        </VScroll>
      </Sheet>

      <SheetTabs>
        <NavArrows><FadedTri $dir="left" /><FadedTri $dir="right" /></NavArrows>
        <SheetTab $w={134}>Convert to Number</SheetTab>
        <SheetTab $active $w={153}>Convert to Number (2)</SheetTab>
        <AddSheet><PlusCircle /></AddSheet>
        <HScroll>
          <DragDots><DotsIco /></DragDots>
          <SBtn $h={15} $w={15}><Tri $dir="left" /></SBtn>
          <HThumb />
          <HTrack />
          <SBtn $h={15} $w={14}><Tri $dir="right" /></SBtn>
        </HScroll>
      </SheetTabs>

      <Status>
        <ViewBtn $on><NormalV /></ViewBtn>
        <ViewBtn><PageV /></ViewBtn>
        <ViewBtn><BreakV /></ViewBtn>
        <ZoomTrack><ZoomMinus /><ZoomLine /><ZoomPlus /><ZoomThumb /></ZoomTrack>
        <ZoomText>100%</ZoomText>
      </Status>
      <Black $h={21} />
      <CursorWrap><Cursor /></CursorWrap>
    </Page>
  );
}
